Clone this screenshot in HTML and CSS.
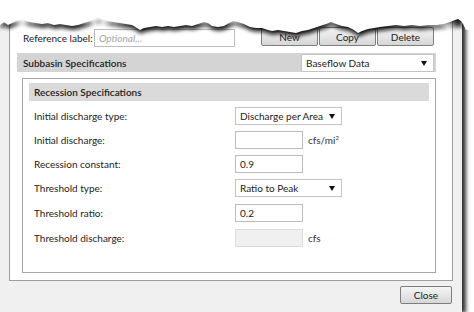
FILE: index.html
```html
<!DOCTYPE html>
<html lang="en">
  <head>
    <meta charset="UTF-8" />
    <title>Subbasin - Baseflow</title>
    <link rel="stylesheet" href="styles.css">
  </head>
  <body>
    <div class="window">
      <div class="panel">
        <!-- reference row -->
        <div class="ref-row">
          <span class="ref-label">Reference label:</span>
          <input class="ref-input" type="text" placeholder="Optional..." />
          <div class="ref-buttons">
            <button class="btn">New</button>
            <button class="btn">Copy</button>
            <button class="btn">Delete</button>
          </div>
        </div>

        <div class="section-bar">
          <span>Subbasin Specifications</span>
          <div class="select select-method">Baseflow Data<span class="caret"></span></div>
        </div>

        <!-- recession group -->
        <div class="group">
          <div class="group-title">Recession Specifications</div>
          <div class="form-row">
            <span class="form-label">Initial discharge type:</span>
            <div class="select">Discharge per Area<span class="caret"></span></div>
          </div>
          <div class="form-row">
            <span class="form-label">Initial discharge:</span>
            <div class="field"></div>
            <span class="unit">cfs/mi<sup>2</sup></span>
          </div>
          <div class="form-row">
            <span class="form-label">Recession constant:</span>
            <div class="field">0.9</div>
          </div>
          <div class="form-row">
            <span class="form-label">Threshold type:</span>
            <div class="select">Ratio to Peak<span class="caret"></span></div>
          </div>
          <div class="form-row">
            <span class="form-label">Threshold ratio:</span>
            <div class="field">0.2</div>
          </div>
          <div class="form-row">
            <span class="form-label">Threshold discharge:</span>
            <div class="field field-disabled"></div>
            <span class="unit">cfs</span>
          </div>
        </div>
      </div>
      <div class="footer">
        <button class="btn btn-close">Close</button>
      </div>
    </div>

    <!-- torn paper edge over the top of the window -->
    <svg class="torn" width="474" height="50" viewBox="0 0 474 50">
      <defs>
        <filter id="blur" x="-5%" y="-50%" width="110%" height="200%">
          <feGaussianBlur stdDeviation="2.2" />
        </filter>
      </defs>
      <polygon class="torn-shadow" filter="url(#blur)" transform="translate(1 3.5)"
        points="0,0 474,0 474,19 462,19 0,19 0,25 4,22 8,25 12,23 16,21 22,19 26,21 30,22 36,23 42,24 48,23 54,25 60,24 66,25 72,26 78,25 84,23 90,21 95,18 98,17 102,19 108,21 114,22 120,23 126,24 132,25 137,28 140,30 144,28 150,27 156,26 162,27 168,26 174,27 180,26 186,25 192,26 198,24 204,22 208,23 212,26 218,27 224,26 229,23 233,21 238,22 244,24 250,27 256,28 262,28 268,30 272,31 278,30 284,31 290,32 296,33 302,31 308,30 314,28 320,26 326,24 331,22 336,24 342,26 348,27 354,30 358,33 362,31 368,29 374,28 380,27 388,26 396,25 404,26 412,25 420,26 428,25 436,25 444,24 450,22 455,20 458,19 461,21 463,24 474,24" />
      <polygon class="torn-paper"
        points="0,0 474,0 474,30 466,30 463,24 461,21 458,19 455,20 450,22 444,24 436,25 428,25 420,26 412,25 404,26 396,25 388,26 380,27 374,28 368,29 362,31 358,33 354,30 348,27 342,26 336,24 331,22 326,24 320,26 314,28 308,30 302,31 296,33 290,32 284,31 278,30 272,31 268,30 262,28 256,28 250,27 244,24 238,22 233,21 229,23 224,26 218,27 212,26 208,23 204,22 198,24 192,26 186,25 180,26 174,27 168,26 162,27 156,26 150,27 144,28 140,30 137,28 132,25 126,24 120,23 114,22 108,21 102,19 98,17 95,18 90,21 84,23 78,25 72,26 66,25 60,24 54,25 48,23 42,24 36,23 30,22 26,21 22,19 16,21 12,23 8,25 4,22 0,25" />
    </svg>
  </body>
</html>
```

FILE: styles.css
```css
/* resets */
* {
  padding: 0;
  margin: 0;
  box-sizing: border-box;
}
body {
  font-family: "Lato", "Liberation Sans", sans-serif;
  font-size: 10px;
  color: #222;
  background: #fff;
  width: 474px;
  height: 312px;
  overflow: hidden;
  position: relative;
}

/* window */
.window {
  width: 462px;
  height: 312px;
  background: #f0f0f0;
  padding: 8px 9px 0 9px;
  box-shadow: 4px 1px 4px rgba(0, 0, 0, 0.8);
}
.panel {
  background: #fff;
  border: 1px solid #9e9e9e;
  height: 273px;
  padding: 0 16px 0 0;
}

/* reference row */
.ref-row {
  display: flex;
  align-items: center;
  height: 18px;
  margin-top: 20px;
  padding-left: 13px;
}
.ref-label {
  width: 71px;
}
.ref-input {
  width: 141px;
  height: 18px;
  padding: 0 4px;
  border: 1px solid #bcbcbc;
  font-family: inherit;
  font-size: 10px;
  outline: none;
}
.ref-input::placeholder {
  font-style: italic;
  color: #a4a4a4;
}
.ref-buttons {
  display: flex;
  gap: 1px;
  margin-left: 26px;
  margin-top: -3px;
}
.ref-buttons .btn {
  width: 57px;
  height: 19px;
}

/* buttons */
.btn {
  font-family: inherit;
  font-size: 10px;
  color: #222;
  border: 1px solid #7e7e7e;
  border-radius: 2px;
  background: linear-gradient(#f4f4f4, #e6e6e6 50%, #d6d6d6);
}

/* bars */
.section-bar {
  display: flex;
  align-items: center;
  justify-content: space-between;
  height: 19px;
  margin: 6px 0 0 7px;
  padding: 0 2px 0 6px;
  background: #d4d4d4;
  font-weight: 600;
}

.group {
  margin: 6px 0 0 12px;
  border: 1px solid #a6a6a6;
  height: 195px;
  padding: 4px 6px 0 6px;
}
.group-title {
  height: 18px;
  line-height: 18px;
  padding-left: 5px;
  background: #dadada;
  font-weight: 600;
}

/* form */
.form-row {
  display: flex;
  align-items: center;
  height: 18px;
  margin-top: 6px;
  padding-left: 5px;
}
.form-row:nth-child(6),
.form-row:nth-child(7) {
  margin-top: 7px;
}
.form-label {
  width: 201px;
}
.field {
  width: 68px;
  height: 18px;
  line-height: 16px;
  padding: 0 4px;
  border: 1px solid #bcbcbc;
  background: #fff;
}
.field-disabled {
  background: #f0f0f0;
  border-color: #dcdcdc;
}
.unit {
  margin-left: 5px;
  color: #333;
}
.unit sup {
  font-size: 6px;
}

.select {
  position: relative;
  width: 107px;
  height: 18px;
  line-height: 16px;
  padding: 0 4px;
  border: 1px solid #c4c4c4;
  background: #fff;
  font-weight: 400;
}
.select-method {
  width: 133px;
}
.caret {
  position: absolute;
  right: 6px;
  top: 6px;
  border-top: 5px solid #111;
  border-left: 3.5px solid transparent;
  border-right: 3.5px solid transparent;
}

/* footer */
.footer {
  display: flex;
  justify-content: flex-end;
  padding: 5px 1px 0 0;
}
.btn-close {
  width: 52px;
  height: 18px;
}

/* torn edge */
.torn {
  position: absolute;
  top: 0;
  left: 0;
  pointer-events: none;
}
.torn-shadow {
  fill: #111;
}
.torn-paper {
  fill: #fff;
}
```
